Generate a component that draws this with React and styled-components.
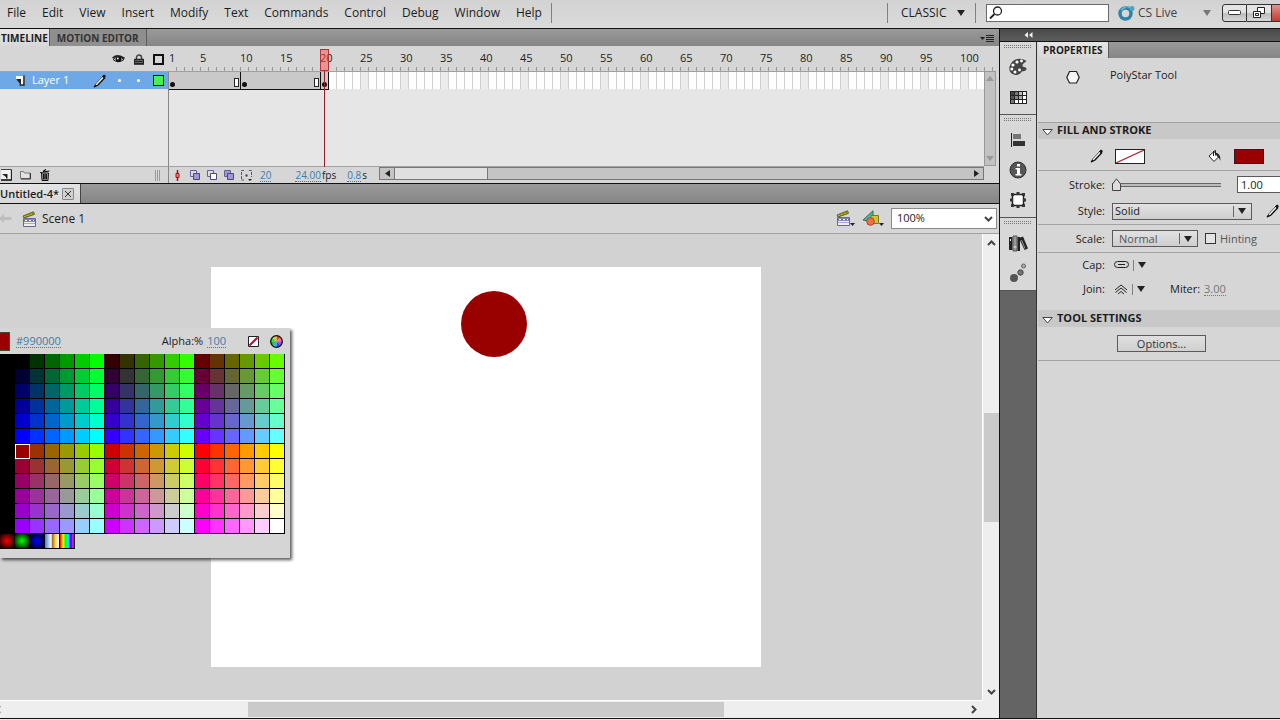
import React from 'react';
import styled, { createGlobalStyle } from 'styled-components';

const INK = '#1c1c1c';
const FACE = '#d6d6d6';
const LINE = '#a2a2a2';
const LINK = '#3f7ca8';
const BAR = 'linear-gradient(#9a9a9a, #858585)';

const Global = createGlobalStyle`
  *, *::before, *::after { box-sizing: border-box; }
  html, body, #root { height: 100%; }
  body { margin: 0; overflow: hidden; background: ${FACE}; color: ${INK};
    font: 11px/16px "Open Sans", "Noto Sans", sans-serif; }
  button, input, select { font: inherit; color: inherit; margin: 0; border-radius: 0; }
  button { padding: 0; border: 0; background: none; }
  svg { display: block; flex: none; }
`;

/* ---------- shell ---------- */
const Shell = styled.div`
  display: flex; flex-direction: column; height: 100vh; min-height: 480px; overflow: hidden;
  border-bottom: 1px solid #e8e8e8;
`;
const MenuBar = styled.header`
  display: flex; align-items: center; height: 28px; flex: none; padding: 0 0 3px 7px;
  background: linear-gradient(#d3d3d3, #dadada); font-size: 12px;
`;
const MenuNav = styled.nav`display: flex; gap: 16px; padding-right: 9px;`;
const MenuButton = styled.button`line-height: 16px; white-space: nowrap;`;
const Divider = styled.span`
  width: 1px; height: ${p => p.$h || 20}px; flex: none; background: #808080;
`;
const Tools = styled.div`display: flex; align-items: center; margin-left: auto; flex: none;`;
const WorkspaceButton = styled.button`
  display: flex; align-items: center; justify-content: space-between; width: 64px; margin: 0 10px 0 13px; font-size: 12px;
`;
const SearchBox = styled.label`
  display: flex; align-items: center; width: 123px; height: 18px; margin-left: 10px; padding-left: 2px;
  background: #fff; border: 1px solid #6a6a6a;
`;
const SearchInput = styled.input`flex: 1; min-width: 0; height: 14px; border: 0; outline: 0; background: transparent;`;
const LiveButton = styled.button`display: flex; align-items: center; gap: 3px; width: 93px; margin-left: 9px; font-size: 12px; color: #444;
  svg:last-child { margin-left: auto; }
`;
const WindowButtons = styled.div`display: flex; width: 58px; margin-left: 11px; overflow: hidden;`;
const WindowButton = styled.button`
  display: grid; place-items: center; width: 25px; height: 18px; flex: none;
  border: 1px solid #333; border-left-width: ${p => (p.$first ? 1 : 0)}px; border-radius: ${p => (p.$first ? '3px 0 0 3px' : 0)};
  background: ${p => (p.$close ? 'linear-gradient(#e0938c, #c23a2e)' : 'linear-gradient(#e4e4e4 45%, #bdbdbd 55%, #d8d8d8)')};
`;
const Workspace = styled.div`
  display: grid; grid-template-columns: minmax(0, 1fr) 37px 243px; grid-template-rows: 13px minmax(0, 1fr);
  flex: 1; min-height: 0; border-top: 1px solid #111; border-bottom: 1px solid #111;
`;
const Main = styled.main`
  grid-row: 1 / 3; position: relative; display: flex; flex-direction: column; min-width: 0; min-height: 0; border-right: 1px solid #111;
`;

/* ---------- tabs ---------- */
const TabBar = styled.div`
  display: flex; align-items: stretch; flex: none; height: ${p => p.$h}px; background: ${BAR};
  ${p => p.$framed && 'border-top: 1px solid #111; border-bottom: 1px solid #111;'}
`;
const Tab = styled.button`
  padding: 0 ${p => p.$pad ?? 7}px; font-size: 10px; font-weight: 700; line-height: 16px; white-space: nowrap;
  color: ${p => (p.$active ? INK : '#333')}; background: ${p => (p.$active ? 'linear-gradient(#e6e6e6, #d8d8d8)' : '#8f8f8f')};
  border-right: 1px solid #5c5c5c;
`;
const PanelMenu = styled.button`margin: 2px 4px 0 auto; align-self: center;`;

/* ---------- timeline ---------- */
const Timeline = styled.section`
  display: grid; grid-template-columns: 169px minmax(0, 1fr) 15px; grid-template-rows: 25px 95px 17px; flex: none;
  background: ${FACE};
`;
const LayerHead = styled.div`
  display: flex; align-items: center; justify-content: flex-end; gap: 9px; padding: 1px 5px 0 0;
`;
const Ruler = styled.div`
  grid-column: 2 / 4; display: flex; overflow: hidden; padding-top: 4px;
  background: repeating-linear-gradient(90deg, transparent 0 7px, #999 7px 8px) 0 100% / 100% 4px no-repeat;
`;
const RulerMark = styled.span`width: ${p => (p.$first ? 31 : 40)}px; flex: none; line-height: 16px;`;
const Layers = styled.div`background: #e6e6e6; border-top: 1px solid ${LINE}; border-right: 1px solid #888;`;
const LayerRow = styled.div`
  display: flex; align-items: center; height: 17px; padding: 0 4px 0 15px; color: #fff; background: #6fa8e6;
`;
const LayerName = styled.button`margin-left: 6px; margin-right: auto; padding-bottom: 2px; color: #fff; line-height: 14px;`;
const LayerDot = styled.span`width: 3px; height: 3px; margin-left: ${p => p.$gap}px; border-radius: 50%; background: #fff;`;
const LayerColor = styled.button`width: 11px; height: 11px; margin-left: 13px; border: 1px solid #111; background: #4cf04c;`;
const Frames = styled.div`background: #e6e6e6; border-top: 1px solid ${LINE};`;
const FrameRow = styled.div`
  display: flex; height: 17px;
  background:
    repeating-linear-gradient(90deg, transparent 0 7px, #cfcfcf 7px 8px),
    repeating-linear-gradient(90deg, #fff 0 32px, #ececec 32px 40px);
`;
const Span = styled.div`
  display: flex; align-items: flex-end; justify-content: space-between; width: ${p => p.$frames * 8}px; height: 18px; flex: none;
  padding: 0 1px 2px 1px; background: #c9c9c9; border-bottom: 1px solid #111; border-right: 1px solid #111;
  &::before { content: ''; width: 5px; height: 5px; border-radius: 50%; background: #111; }
`;
const SpanEnd = styled.i`width: 5px; height: 9px; border: 1px solid #222; background: #fff;`;
const Playhead = styled.div`
  position: absolute; z-index: 2; left: 320px; top: 20px; width: 9px; height: 118px; pointer-events: none;
  background: linear-gradient(#a01c22, #a01c22) 4px 22px / 1px 96px no-repeat;
  &::before { content: ''; display: block; height: 22px; border: 1px solid #b3343a; background: rgba(255, 80, 80, .5); }
`;
const FrameScroll = styled.div`
  display: flex; flex-direction: column; justify-content: space-between; align-items: center; width: 12px; padding: 4px 0;
  background: #c2c2c2; border: 1px solid #999;
`;
const LayerFoot = styled.div`
  display: flex; align-items: center; gap: 8px; padding: 0 7px 0 1px; border-top: 1px solid ${LINE}; border-right: 1px solid #888;
  svg:last-child { margin-left: auto; }
`;
const FrameFoot = styled.div`
  display: grid; grid-template-columns: 210px minmax(0, 1fr); border-top: 1px solid ${LINE}; line-height: 14px; font-size: 10px;
`;
const FrameTools = styled.div`display: flex; align-items: center; padding-left: 6px; gap: 7px;`;
const Readout = styled.span`display: inline-flex; align-items: center; gap: 1px; margin-left: ${p => p.$gap || 0}px;`;
const HotText = styled.button`
  color: ${p => (p.$muted ? '#777' : LINK)}; line-height: 12px; border-bottom: 1px dotted currentColor;
`;
const HScroll = styled.div`
  display: flex; align-items: center; height: 13px; background: #c4c4c4; border: 1px solid #777;
`;
const HScrollEnd = styled.button`display: grid; place-items: center; width: 14px; height: 11px; margin-left: ${p => (p.$end ? 'auto' : 0)};`;
const HScrollThumb = styled.div`width: 94px; height: 11px; background: #e0e0e0; border: solid #777; border-width: 0 1px;`;

/* ---------- document ---------- */
const DocTab = styled.div`
  display: flex; align-items: center; width: 81px; padding-top: 1px; font-weight: 600; white-space: nowrap;
  background: linear-gradient(#e4e4e4, #d8d8d8); border-right: 1px solid #444;
`;
const CloseTab = styled.button`
  display: grid; place-items: center; width: 12px; height: 12px; margin-left: auto; margin-right: 6px; border: 1px solid #888; border-radius: 1px; background: #d0d0d0;
`;
const SceneBar = styled.div`
  display: flex; align-items: center; gap: 5px; flex: none; height: 30px; padding-right: 2px; font-size: 12px;
  border-bottom: 1px solid ${LINE};
`;
const SceneTools = styled.div`display: flex; align-items: center; gap: 7px; margin-left: auto; padding-bottom: 1px;`;
const Picker = styled.label`
  position: relative; display: flex; width: ${p => p.$w}px; height: ${p => p.$h || 17}px; flex: none;
  border: 1px solid ${p => (p.$white ? '#8a8a8a' : '#5a5a5a')};
  background: ${p => (p.$white ? '#fff' : 'linear-gradient(#e2e2e2, #cecece)')}; color: ${p => (p.$muted ? '#555' : INK)};
  font-size: 11px;
`;
const PickerSelect = styled.select`
  appearance: none; flex: 1; width: 100%; padding: 0 18px 0 ${p => p.$pad || 2}px; border: 0; outline: 0; background: transparent; line-height: 14px;
`;
const PickerArrow = styled.span`
  position: absolute; right: 0; top: 1px; bottom: 1px; width: ${p => (p.$split ? 18 : 16)}px; display: grid; place-items: center; pointer-events: none;
  ${p => p.$split && `&::before { content: ''; position: absolute; left: 0; top: 1px; bottom: 1px; width: 1px; background: #666; }`}
`;
const DocArea = styled.div`
  position: relative; display: grid; grid-template-columns: minmax(0, 1fr) 17px; grid-template-rows: minmax(0, 1fr) 18px; flex: 1; min-height: 0;
  background: #eee;
`;
const Pasteboard = styled.div`
  display: flex; align-items: center; justify-content: center; overflow: hidden; padding-right: 10px; background: #d2d2d2;
`;
const Stage = styled.svg`width: 550px; height: 400px; background: #fff;`;
const VTrack = styled.div`
  display: grid; grid-template-rows: 18px 161fr 110fr 160fr 18px; border-left: 1px solid #fff; place-items: center;
`;
const HTrack = styled.div`
  display: grid; grid-template-columns: 8px 240fr 477fr 240fr 18px; border-top: 1px solid #fff; align-items: center; justify-items: center;
`;
const Thumb = styled.div`
  background: #cacaca; ${p => (p.$v ? 'grid-row: 3; width: 15px; height: 100%;' : 'grid-column: 3; height: 15px; width: 100%;')}
`;
const EndButton = styled.button`
  display: grid; place-items: center; width: 100%; height: 100%; overflow: hidden;
  ${p => p.$row && `grid-row: ${p.$row};`} ${p => p.$col && `grid-column: ${p.$col};`}
  ${p => p.$left && 'justify-content: end; padding-right: 5px;'}
`;

/* ---------- swatch popup ---------- */
const Popup = styled.div`
  position: absolute; z-index: 3; left: 0; top: 94px; width: 290px; padding-bottom: 9px; background: #d5d5d5;
  box-shadow: 2px 2px 3px rgba(0, 0, 0, .65); clip-path: inset(0 -8px -8px 0);
`;
const PopupHead = styled.div`display: flex; align-items: center; height: 26px; padding-right: 7px;`;
const CurrentColor = styled.span`width: 10px; height: 19px; margin-right: 6px; background: #990000; border: solid #444; border-width: 1px 1px 1px 0;`;
const AlphaLabel = styled.span`margin-left: auto; margin-right: 4px;`;
const HeadIcon = styled.button`margin-left: ${p => p.$gap}px;`;
const SwatchArea = styled.div`display: grid; grid-template-columns: repeat(19, 15px);`;
const BlackColumn = styled.div`grid-row: 1 / 13; background: #000;`;
const Swatch = styled.button`
  height: 15px; background: ${p => p.$color}; border: solid #000; border-width: 0 1px 1px 0;
  ${p => p.$on && 'border: 1px solid #fff; outline: 0;'}
`;

/* ---------- dock ---------- */
const DockHead = styled.div`
  grid-column: 2 / 4; display: flex; align-items: center; padding-left: 24px; background: linear-gradient(#4a4a4a, #5c5c5c);
  border-bottom: 1px solid #111;
`;
const Dock = styled.aside`background: #646464; border-right: 1px solid #333;`;
const DockGroup = styled.div`
  display: flex; flex-direction: column; align-items: center; padding: 3px 0 2px;
  background: #d8d8d8; border-bottom: 1px solid #555;
`;
const Grip = styled.span`
  width: 28px; height: 4px; margin-bottom: 3px;
  background: repeating-linear-gradient(90deg, transparent 0 1px, #d8d8d8 1px 2px), repeating-linear-gradient(#777 0 1px, #d8d8d8 1px 2px);
`;
const DockButton = styled.button`display: grid; place-items: center; width: 36px; height: 30px;`;
const Props = styled.aside`min-width: 0; overflow: hidden; padding-left: 1px; background: ${FACE};`;
const ToolTitle = styled.div`display: flex; align-items: flex-start; gap: 30px; height: 64px; padding: 9px 0 0 28px; svg { margin-top: 3px; }`;
const SectionHead = styled.h2`
  display: flex; align-items: center; gap: 4px; height: 17px; margin: ${p => (p.$line ? 0 : 9)}px 0 0; padding: 0 0 3px 4px;
  font-size: 11px; line-height: 13px; font-weight: 700;
  background: #c8c8c8; border-top: 1px solid ${p => (p.$line ? LINE : '#c8c8c8')};
  svg { margin-top: 5px; }
`;
const Row = styled.div`
  display: grid; grid-template-columns: 67px max-content max-content; column-gap: 7px; align-items: center; height: ${p => p.$h}px;
  border-bottom: ${p => (p.$line ? `1px solid ${LINE}` : '0')};
`;
const Label = styled.label`text-align: right; white-space: nowrap;`;
const PaintRow = styled.div`
  display: flex; align-items: center; height: 32px; padding: 3px 0 0 52px; border-bottom: 1px solid ${LINE};
`;
const Chip = styled.button`
  width: 30px; height: 15px; margin-left: 12px; border: 1px solid #222; background: ${p => (p.$none ? '#fff' : '#990000')};
`;
const FillTool = styled.span`margin-left: 63px;`;
const Slider = styled.input`
  appearance: none; width: 109px; height: 14px; background: linear-gradient(#666 0 1px, #bbb 1px 3px, #666 3px 4px) 0 5px / 100% 4px no-repeat;
  &::-webkit-slider-thumb { appearance: none; width: 10px; height: 14px; border: 0;
    background: url("data:image/svg+xml,%3Csvg xmlns='http://www.w3.org/2000/svg' width='10' height='14'%3E%3Cpath d='M.5 12.500V6L4.500 .8 8.500 6v6.500z' fill='%23ddd' stroke='%23444'/%3E%3C/svg%3E"); }
`;
const NumberInput = styled.input`width: 52px; height: 17px; margin-left: 9px; padding: 0 3px; border: 1px solid #5a5a5a; outline: 0; background: #fff;`;
const Check = styled.input`appearance: none; width: 11px; height: 11px; border: 1px solid #333; background: #e4e4e4;`;
const CheckLabel = styled.label`display: flex; align-items: center; gap: 4px; color: #555;`;
const IconMenu = styled.button`display: flex; align-items: center; gap: 4px; padding-left: ${p => p.$pad || 0}px;`;
const OptionsRow = styled.div`display: flex; height: 34px; padding: 8px 0 0 79px; border-bottom: 1px solid ${LINE};`;
const OptionsButton = styled.button`
  width: 89px; height: 17px; line-height: 14px; border: 1px solid #5a5a5a; background: linear-gradient(#e0e0e0, #d0d0d0); color: #333;
`;

/* ---------- drawings ---------- */
const Svg = ({ w, h, children }) => (
  <svg width={w} height={h} viewBox={`0 0 ${w} ${h}`} fill="none" aria-hidden="true">{children}</svg>
);
const Down = ({ c = '#222', w = 8, h = 6 }) => <Svg w={w} h={h}><path d={`M0 0H${w}L${w / 2} ${h}z`} fill={c} /></Svg>;
const Up = () => <Svg w={8} h={5}><path d="M0 5h8L4 0z" fill="#999" /></Svg>;
const Side = ({ left }) => <Svg w={5} h={7}><path d={left ? 'M5 0v7L0 3.500z' : 'M0 0v7l5-3.500z'} fill="#222" /></Svg>;
const Chevron = ({ dir }) => {
  const d = { up: 'M1 6l3.500-3.500L8 6', down: 'M1 3l3.500 3.500L8 3', left: 'M6 1L2.500 4.500 6 8', right: 'M3 1l3.500 3.500L3 8' }[dir];
  return <Svg w={9} h={9}><path d={d} stroke="#444" strokeWidth="2" /></Svg>;
};
const Magnifier = () => <Svg w={16} h={14}><circle cx="8.500" cy="5" r="4" stroke="#222" strokeWidth="1.300" /><path d="M5.500 8L1 12.500" stroke="#222" strokeWidth="1.800" /></Svg>;
const LiveLogo = () => (
  <Svg w={17} h={16}><circle cx="7.500" cy="8.500" r="5.500" stroke="#2d84a6" strokeWidth="3.500" /><circle cx="14" cy="3.500" r="2.500" fill="#4fa3bf" /><path d="M3 5a6 6 0 0 1 5-2.500" stroke="#75bdd2" strokeWidth="1.500" /><circle cx="10.500" cy="2" r="1.200" fill="#69b2c9" /></Svg>
);
const Eye = () => <Svg w={13} h={12}><path d="M1 6.500Q6 1.500 12 6.500 6 11 1 6.500z" fill="#bbb" stroke="#222" /><path d="M.5 5Q6 .5 12.500 5.500" stroke="#222" strokeWidth="1.600" /><circle cx="6.500" cy="6.300" r="2.800" fill="#111" /><circle cx="5.800" cy="5.500" r=".9" fill="#fff" /></Svg>;
const Lock = () => <Svg w={10} h={11}><path d="M2.500 5.500V3.500a2.500 2.500 0 0 1 5 0v2" stroke="#444" strokeWidth="1.500" /><path d="M0 4.800h10v6H0z" fill="#222" /><path d="M1 6.500h8M1 8.500h8" stroke="#666" /></Svg>;
const Outline = () => <Svg w={11} h={11}><path d="M1 1h9v9H1z" stroke="#111" strokeWidth="2" /></Svg>;
const LayerIcon = () => <Svg w={11} h={11}><path d="M1 1h9v9H5V5H1z" fill="#fff" /><path d="M9 .5v9.500H4.500" stroke="#222" strokeWidth="1.600" /><path d="M1 4h5v6z" fill="#222" /></Svg>;
const NewLayer = () => <Svg w={11} h={12}><path d="M0 .5h10.500v10.500H0" fill="#f2f2f2" stroke="#444" /><path d="M10.500 1v10H0" stroke="#222" strokeWidth="1.300" /><path d="M1 5h5.500v4.500H5V8z" fill="#222" /></Svg>;
const Pencil = () => <Svg w={13} h={14}><path d="M1 13l2-3.500L10 2l2 1.500L5 11z" fill="#eee" stroke="#444" strokeWidth=".8" /><path d="M1 13l4-2 7-7.500" stroke="#111" strokeWidth="1.300" /><path d="M.8 13.200L3.200 12 2.200 10.500zM9 2.500L11 .5l2 1.500-2 2.500z" fill="#111" /></Svg>;
const Folder = () => <Svg w={12} h={10}><path d="M.5 8.500v-7h3l1 1.500h5.500v5.500z" fill="#e2e2e2" stroke="#777" /><path d="M10.500 3v6H1" stroke="#333" /></Svg>;
const Trash = () => <Svg w={10} h={12}><path d="M1.500 4h7L8 11.500H2z" fill="#bbb" stroke="#111" /><path d="M0 3.500L9.500 2M3 2.500L6 .5M3.500 5v5.500M5 5v5.500M6.500 5v5.500" stroke="#111" strokeWidth="1.200" /></Svg>;
const GripLines = () => <Svg w={6} h={11}><path d="M.5 0v11M2.500 0v11M4.500 0v11" stroke="#999" /></Svg>;
const CenterFrame = () => <Svg w={5} h={13}><path d="M2.500 1v11" stroke="#b00d16" strokeWidth="1.500" /><path d="M1 4.500h3v4H1z" fill="#d87" stroke="#b00d16" /></Svg>;
const Onion = ({ back, front }) => <Svg w={10} h={10}><path d="M.5 .5h6v6h-6z" fill={back} stroke="#66609a" /><path d="M3.500 3.500h6v6h-6z" fill={front} stroke="#4b4780" /></Svg>;
const Markers = () => <Svg w={11} h={11}><path d="M3 .5H.5v9.500H3M8 .5h2.500V7" stroke="#55508c" strokeDasharray="3 1" /><path d="M4.500 4.500h2v2h-2z" fill="#333" /><path d="M7 9h4l-2 2z" fill="#222" /></Svg>;
const MenuLines = () => <Svg w={15} h={8}><path d="M0 2h5L2.500 5z" fill="#222" /><path d="M6 .5h8M6 2.500h8M6 4.500h8M6 6.500h8" stroke="#222" /></Svg>;
const Clapper = () => (
  <Svg w={15} h={16}><path d="M1 5L11.500 .8l1 2.500L2 7z" fill="#b8b820" stroke="#62621a" /><path d="M4 4.500l1 1.200M7 3.300l1 1.200M10 2.200l1 1.200" stroke="#55550f" /><path d="M1.500 7.500h12v8h-12z" fill="#eee" stroke="#6863a4" /><path d="M1.500 9.500h12" stroke="#6863a4" strokeWidth="2.500" /><path d="M3 9.500h2M7 9.500h2M11 9.500h1" stroke="#fff" /><path d="M2 12.500h11" stroke="#aaa8cf" /></Svg>
);
const Shapes = () => (
  <Svg w={18} h={16}><path d="M1 10L11 .8V12z" fill="#53b89b" stroke="#23705c" /><path d="M9 5.500h7.500v8H9z" fill="#d1c431" stroke="#80751a" /><circle cx="8.500" cy="11.500" r="3.800" fill="#ee7247" stroke="#b44020" /></Svg>
);
const ToolDrop = styled.button`display: flex; align-items: flex-end; svg:last-child { margin-left: -1px; }`;
const BackArrow = () => <Svg w={12} h={11}><path d="M-1 5.500L4 1v3h7.500v3H4v3z" fill="#bdbdbd" /></Svg>;
const NoColor = () => <Svg w={11} h={11}><path d="M.5 .5h10v10H.5z" fill="#fff" stroke="#222" /><path d="M1.500 9.500l8-8" stroke="#a81632" strokeWidth="2" /></Svg>;
const Wheel = () => (
  <Svg w={13} h={13}>
    {['#ef3b34', '#ed7ab0', '#c13bd8', '#3346e6', '#29b8d8', '#25bd45', '#35de32', '#d6d32c'].map((c, i) => {
      const p = a => `${6.5 + 6 * Math.sin(a)} ${6.5 - 6 * Math.cos(a)}`;
      const a = (i * Math.PI) / 4;
      return <path key={c} d={`M6.500 6.500L${p(a)}A6 6 0 0 1 ${p(a + Math.PI / 4)}z`} fill={c} />;
    })}
    <circle cx="6.500" cy="6.500" r="5.800" stroke="#111" strokeWidth="1.300" />
  </Svg>
);
const Collapse = () => <Svg w={9} h={6}><path d="M4 0v6L.5 3zM8.500 0v6L5 3z" fill="#eee" /></Svg>;
const Palette = () => (
  <Svg w={20} h={18}><path d="M18.500 3C14 0 8 0 4.500 3.500c-4 4-4.500 10 0 12.500 4 2 7.500 .5 9-2 1-1.500 4.500 0 5-3 0-2.500-3.500-1.500-4-3-.5-2 2-3 4-5z" fill="#444" /><g fill="#fff"><circle cx="9" cy="4" r="1.600" /><circle cx="5" cy="7" r="1.600" /><circle cx="3.800" cy="11" r="1.500" /><circle cx="7" cy="14" r="1.500" /><circle cx="13.500" cy="3" r="1.400" /><circle cx="11.500" cy="12" r="1.400" /></g></Svg>
);
const CELLS = ['#444', '#777', '#bbb', '#eee', '#555', '#888', '#aaa', '#fff', '#777', '#fff', '#fff', '#fff'];
const SwatchGrid = () => (
  <Svg w={17} h={13}><path d="M0 0h17v13H0z" fill="#222" />{CELLS.map((c, i) => <path key={i} d={`M${(i % 4) * 4 + 1} ${Math.floor(i / 4) * 4 + 1}h3v3h-3z`} fill={c} />)}</Svg>
);
const Align = () => <Svg w={15} h={14}><path d="M.5 0v14" stroke="#222" /><path d="M2 1h8v5H2z" fill="#777" /><path d="M2 8h12v5H2z" fill="#333" /></Svg>;
const Info = () => <Svg w={18} h={18}><circle cx="9" cy="9" r="8" fill="#555" stroke="#333" /><path d="M8 3h3v2.500H8zM6.500 7H11v6h1.500v1.500h-6V13H8V8.500H6.500z" fill="#fff" /></Svg>;
const Transform = () => <Svg w={16} h={16}><path d="M2.500 2.500h11v11h-11z" fill="#fff" stroke="#222" strokeWidth="1.500" /><path d="M1 1h3v3H1zM6.500 0h3v3h-3zM12 1h3v3h-3zM0 6.500h3v3H0zM13 6.500h3v3h-3zM1 12h3v3H1zM6.500 13h3v3h-3zM12 12h3v3h-3z" fill="#333" /></Svg>;
const Books = () => <Svg w={19} h={17}><path d="M0 2h3.500v13H0z" fill="#222" /><path d="M4 1h4v15H4z" fill="#999" stroke="#555" /><path d="M8.500 2h2.500v14H8.500z" fill="#222" /><path d="M10 3l4-1.500 5 12-3.500 1.500z" fill="#222" /><path d="M12.500 5l3.500 8.500" stroke="#999" /><path d="M1.500 4v2M4.500 12h3" stroke="#eee" /></Svg>;
const Motion = () => <Svg w={18} h={20}><circle cx="5" cy="15" r="4" fill="#555" /><circle cx="11.500" cy="9.500" r="2.700" fill="#777" stroke="#444" /><circle cx="14.500" cy="3" r="2" fill="#aaa" stroke="#666" /></Svg>;
const Hexagon = () => <Svg w={14} h={15}><path d="M3.500 1.500h7L13.200 7.500l-2.700 5.500h-7L.8 7.500z" fill="#f4f7f6" stroke="#222" strokeWidth="1.200" /></Svg>;
const Fold = () => <Svg w={11} h={7}><path d="M.8 .5h9.500L5.500 6z" fill="#fff" stroke="#444" /></Svg>;
const Bucket = () => <Svg w={14} h={13}><path d="M1 6l5-4.500L10.500 7 6 11.500z" fill="#fff" stroke="#222" /><path d="M5.500 6V1.500L7.500 .5v5" stroke="#222" /><path d="M7 2.500q6 .5 5.500 8.500Q11.500 8 9.500 6.500z" fill="#222" /></Svg>;
const CapIcon = () => <Svg w={15} h={8}><rect x=".5" y=".5" width="14" height="6" rx="3" stroke="#222" /><path d="M4 3.500h7" stroke="#222" /></Svg>;
const JoinIcon = () => <Svg w={14} h={11}><path d="M1 6l6-5 6 5M1.500 8.500L7 4l5.500 4.500M4 10l3-2.500L10 10" stroke="#222" /></Svg>;
const NoneStroke = () => <Svg w={28} h={13}><path d="M0 13L28 0" stroke="#b8283c" strokeWidth="1.200" /></Svg>;

/* ---------- data ---------- */
const MENUS = ['File', 'Edit', 'View', 'Insert', 'Modify', 'Text', 'Commands', 'Control', 'Debug', 'Window', 'Help'];
const MARKS = [1, ...Array.from({ length: 20 }, (_, i) => (i + 1) * 5)];
const STEPS = ['00', '33', '66', '99', 'CC', 'FF'];
const SWATCHES = Array.from({ length: 12 * 18 }, (_, i) => {
  const row = Math.floor(i / 18);
  const col = i % 18;
  return `#${STEPS[Math.floor(col / 6) + (row > 5 ? 3 : 0)]}${STEPS[col % 6]}${STEPS[row % 6]}`;
});
const GRADIENTS = [
  ['Red radial', 'radial-gradient(#f00, #000)'],
  ['Green radial', 'radial-gradient(#0f0, #000)'],
  ['Blue radial', 'radial-gradient(#00f, #000)'],
  ['Chrome', 'linear-gradient(90deg, #4682d8, #fff 45%, #9a6a14 50%, #ffd24a 75%, #fff)'],
  ['Rainbow', 'linear-gradient(90deg, #f00, #ff0 22%, #0f0 40%, #0ff 58%, #00f 76%, #f0f 90%, #f00)'],
];

function ColorPopup() {
  return (
    <Popup role="dialog" aria-label="Fill color">
      <PopupHead>
        <CurrentColor />
        <HotText>#990000</HotText>
        <AlphaLabel>Alpha:%</AlphaLabel>
        <HotText>100</HotText>
        <HeadIcon $gap={22} aria-label="No color"><NoColor /></HeadIcon>
        <HeadIcon $gap={11} aria-label="Color picker"><Wheel /></HeadIcon>
      </PopupHead>
      <SwatchArea>
        <BlackColumn />
        {SWATCHES.map(c => <Swatch key={c} $color={c} $on={c === '#990000'} aria-label={c} />)}
        {GRADIENTS.map(([name, g]) => <Swatch key={name} $color={g} aria-label={name} />)}
      </SwatchArea>
    </Popup>
  );
}

function TimelinePanel() {
  return (
    <>
      <TabBar $h={17}>
        <Tab $active $pad={1}>TIMELINE</Tab>
        <Tab>MOTION EDITOR</Tab>
        <PanelMenu aria-label="Timeline menu"><MenuLines /></PanelMenu>
      </TabBar>
      <Timeline>
        <LayerHead><Eye /><Lock /><Outline /></LayerHead>
        <Ruler>{MARKS.map(n => <RulerMark key={n} $first={n === 1}>{n}</RulerMark>)}</Ruler>
        <Layers>
          <LayerRow>
            <LayerIcon /><LayerName>Layer 1</LayerName><Pencil />
            <LayerDot $gap={12} /><LayerDot $gap={16} /><LayerColor aria-label="Outline color" />
          </LayerRow>
        </Layers>
        <Frames>
          <FrameRow>
            <Span $frames={9}><SpanEnd /></Span>
            <Span $frames={10}><SpanEnd /></Span>
            <Span $frames={1} />
          </FrameRow>
        </Frames>
        <FrameScroll><Up /><Down c="#999" h={5} /></FrameScroll>
        <LayerFoot><NewLayer /><Folder /><Trash /><GripLines /></LayerFoot>
        <FrameFoot>
          <FrameTools>
            <CenterFrame />
            <Readout $gap={3}><Onion back="#ddd" front="#9d98d0" /></Readout>
            <Onion back="#ddd" front="#fff" />
            <Onion back="#9d98d0" front="#9d98d0" />
            <Markers />
            <Readout $gap={1}><HotText>20</HotText></Readout>
            <Readout $gap={17}><HotText>24.00</HotText>fps</Readout>
            <Readout $gap={4}><HotText>0.8</HotText>s</Readout>
          </FrameTools>
          <HScroll>
            <HScrollEnd aria-label="Scroll left"><Side left /></HScrollEnd>
            <HScrollThumb />
            <HScrollEnd $end aria-label="Scroll right"><Side /></HScrollEnd>
          </HScroll>
        </FrameFoot>
      </Timeline>
      <Playhead />
    </>
  );
}

function DocumentPanel() {
  return (
    <>
      <TabBar $h={21} $framed>
        <DocTab>Untitled-4*
          <CloseTab aria-label="Close"><Svg w={8} h={8}><path d="M1 1l6 6M7 1L1 7" stroke="#333" /></Svg></CloseTab>
        </DocTab>
      </TabBar>
      <SceneBar>
        <BackArrow />
        <Readout $gap={5}><Clapper /></Readout>
        <span>Scene 1</span>
        <SceneTools>
          <ToolDrop aria-label="Edit scene"><Clapper /><Down w={5} h={3} /></ToolDrop>
          <ToolDrop aria-label="Edit symbols"><Shapes /><Down w={5} h={3} /></ToolDrop>
          <Picker $w={106} $h={21} $white>
            <PickerSelect aria-label="Zoom" $pad={5}><option>100%</option></PickerSelect>
            <PickerArrow><Chevron dir="down" /></PickerArrow>
          </Picker>
        </SceneTools>
      </SceneBar>
      <DocArea>
        <Pasteboard>
          <Stage viewBox="0 0 550 400" role="img" aria-label="Stage"><circle cx="283" cy="57" r="33" fill="#990000" /></Stage>
        </Pasteboard>
        <VTrack>
          <EndButton $row={1} aria-label="Up"><Chevron dir="up" /></EndButton>
          <Thumb $v />
          <EndButton $row={5} aria-label="Down"><Chevron dir="down" /></EndButton>
        </VTrack>
        <HTrack>
          <EndButton $col={1} $left aria-label="Left"><Chevron dir="left" /></EndButton>
          <Thumb />
          <EndButton $col={5} aria-label="Right"><Chevron dir="right" /></EndButton>
        </HTrack>
        <ColorPopup />
      </DocArea>
    </>
  );
}

const DOCK = [
  [['Color', Palette], ['Swatches', SwatchGrid]],
  [['Align', Align], ['Info', Info], ['Transform', Transform]],
  [['Library', Books], ['Motion presets', Motion]],
];

function PropertiesPanel() {
  return (
    <Props>
      <TabBar $h={16}><Tab $active $pad={5}>PROPERTIES</Tab></TabBar>
      <ToolTitle><Hexagon /><span>PolyStar Tool</span></ToolTitle>
      <SectionHead $line><Fold />FILL AND STROKE</SectionHead>
      <PaintRow>
        <Pencil /><Chip aria-label="Stroke color: none" $none><NoneStroke /></Chip>
        <FillTool><Bucket /></FillTool><Chip aria-label="Fill color" />
      </PaintRow>
      <Row $h={27}>
        <Label htmlFor="stroke">Stroke:</Label>
        <Slider id="stroke" type="range" min="0" max="200" defaultValue="1" />
        <NumberInput aria-label="Stroke height" defaultValue="1.00" />
      </Row>
      <Row $h={27} $line>
        <Label htmlFor="style">Style:</Label>
        <Picker $w={140}><PickerSelect id="style"><option>Solid</option></PickerSelect><PickerArrow $split><Down /></PickerArrow></Picker>
        <IconMenu $pad={7} aria-label="Edit stroke style"><Pencil /></IconMenu>
      </Row>
      <Row $h={28} $line>
        <Label htmlFor="scale">Scale:</Label>
        <Picker $w={86} $muted><PickerSelect id="scale" $pad={6}><option>Normal</option></PickerSelect><PickerArrow $split><Down /></PickerArrow></Picker>
        <CheckLabel><Check type="checkbox" />Hinting</CheckLabel>
      </Row>
      <Row $h={24}>
        <Label as="span">Cap:</Label>
        <IconMenu $pad={2} aria-label="Cap"><CapIcon /><Divider $h={11} /><Down /></IconMenu>
      </Row>
      <Row $h={24}>
        <Label as="span">Join:</Label>
        <IconMenu $pad={2} aria-label="Join"><JoinIcon /><Divider $h={11} /><Down /></IconMenu>
        <Readout $gap={18}>Miter:&nbsp;<HotText $muted>3.00</HotText></Readout>
      </Row>
      <SectionHead><Fold />TOOL SETTINGS</SectionHead>
      <OptionsRow><OptionsButton>Options...</OptionsButton></OptionsRow>
    </Props>
  );
}

export default function App() {
  return (
    <Shell>
      <Global />
      <MenuBar>
        <MenuNav>{MENUS.map(m => <MenuButton key={m}>{m}</MenuButton>)}</MenuNav>
        <Divider />
        <Tools>
          <Divider />
          <WorkspaceButton>CLASSIC<Down /></WorkspaceButton>
          <Divider />
          <SearchBox><Magnifier /><SearchInput aria-label="Search" /></SearchBox>
          <LiveButton><LiveLogo />CS Live<Down c="#777" /></LiveButton>
          <WindowButtons>
            <WindowButton $first aria-label="Minimize"><Svg w={13} h={5}><rect x=".5" y=".5" width="12" height="4" rx="1" fill="#fff" stroke="#333" /></Svg></WindowButton>
            <WindowButton aria-label="Restore"><Svg w={12} h={11}><path d="M4.500 .5h7v6h-7z" fill="#fff" stroke="#222" /><path d="M.5 4.500h7v6h-7z" fill="#fff" stroke="#222" /><path d="M2.500 6.500h3v2h-3z" stroke="#222" /></Svg></WindowButton>
            <WindowButton $close aria-label="Close" />
          </WindowButtons>
        </Tools>
      </MenuBar>
      <Workspace>
        <Main><TimelinePanel /><DocumentPanel /></Main>
        <DockHead><Collapse /></DockHead>
        <Dock>
          {DOCK.map(group => (
            <DockGroup key={group[0][0]}>
              <Grip />
              {group.map(([name, Icon]) => <DockButton key={name} aria-label={name}><Icon /></DockButton>)}
            </DockGroup>
          ))}
        </Dock>
        <PropertiesPanel />
      </Workspace>
    </Shell>
  );
}
